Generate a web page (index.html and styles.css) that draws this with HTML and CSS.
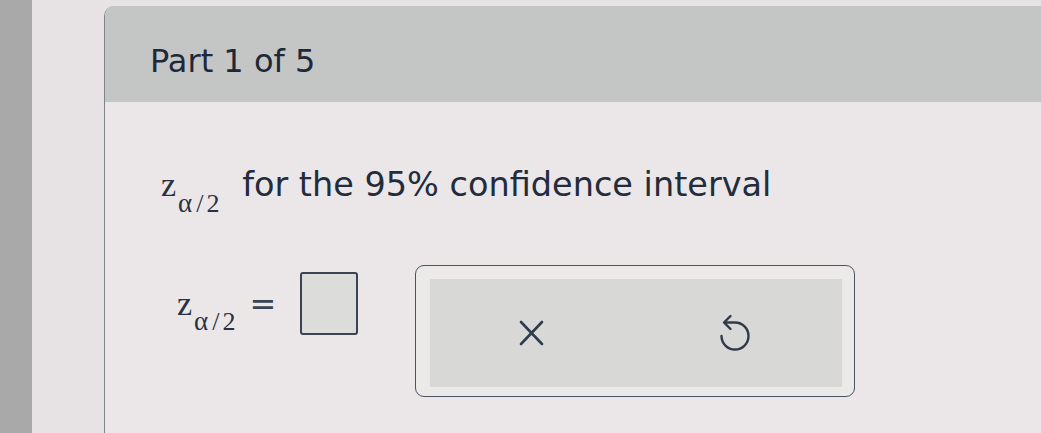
FILE: index.html
```html
<!DOCTYPE html>
<html lang="en">
<head>
<meta charset="utf-8">
<title>Part 1 of 5</title>
<link rel="stylesheet" href="styles.css">
</head>
<body>
<div class="page">
  <div class="rail"></div>
  <div class="margin"></div>
  <main class="card">
    <header class="card-head">
      <h1 class="part">Part 1 of 5</h1>
    </header>
    <section class="card-body">
      <p class="question"><span class="math"><span class="z">z</span><sub class="sub"><span class="alpha">α</span>/2</sub></span> for the 95% confidence interval</p>
      <div class="answer">
        <div class="expr"><span class="math"><span class="z">z</span><sub class="sub"><span class="alpha">α</span>/2</sub></span><span class="eq">=</span><span class="input"></span></div>
        <div class="tools">
          <div class="tools-inner">
            <button class="tool" type="button" aria-label="Clear">
              <svg width="25" height="26" viewBox="0 0 25 26"><path d="M2 2 L23 24 M23 2 L2 24" fill="none" stroke="#2f3b4d" stroke-width="2.6" stroke-linecap="round"/></svg>
            </button>
            <button class="tool" type="button" aria-label="Undo">
              <svg width="34" height="40" viewBox="0 0 34 40"><path d="M3.5 23 A13.5 13.5 0 1 0 17 9.5 H7" fill="none" stroke="#2f3b4d" stroke-width="2.4" stroke-linecap="round"/><path d="M12.5 3 L6 9.5 L12.5 16" fill="none" stroke="#2f3b4d" stroke-width="2.4" stroke-linecap="round" stroke-linejoin="round"/></svg>
            </button>
          </div>
        </div>
      </div>
    </section>
  </main>
</div>
</body>
</html>
```

FILE: styles.css
```css
html, body {
  margin: 0;
  padding: 0;
}

body {
  background: #e8e3e5;
  font-family: "DejaVu Sans", Verdana, sans-serif;
  color: #222c3c;
}

.page {
  display: flex;
  height: 433px;
  overflow: hidden;
}

.rail {
  width: 32px;
  flex: none;
  background: #a8a9a8;
}

.margin {
  width: 72px;
  flex: none;
  background: #e7e2e4;
}

.card {
  flex: 1;
  margin-top: 6px;
  display: flex;
  flex-direction: column;
  background: #ebe7e8;
  border-left: 1px solid #7f8387;
  border-top-left-radius: 10px;
  overflow: hidden;
}

.card-head {
  height: 96px;
  flex: none;
  background: #c3c6c4;
  padding: 39px 0 0 45px;
  box-sizing: border-box;
}

.part {
  margin: 0;
  font-size: 32px;
  font-weight: normal;
  line-height: 32px;
  color: #1f2838;
}

.card-body {
  flex: 1;
  padding: 63px 0 0 56px;
}

.question {
  margin: 0;
  font-size: 33.5px;
  line-height: 40px;
  white-space: nowrap;
}

.math {
  font-family: "Liberation Serif", "Times New Roman", serif;
  margin-right: 9px;
  color: #2a3242;
}

.z {
  font-size: 34px;
}

.sub {
  font-size: 26px;
  line-height: 0;
  vertical-align: -16px;
  margin-left: 2px;
  letter-spacing: 3px;
}

.alpha {
  font-size: 27px;
  margin-right: 1px;
}

.answer {
  margin-top: 60px;
  display: flex;
  align-items: flex-start;
}

.expr {
  margin-left: 16px;
  margin-top: 7px;
  font-size: 32px;
  line-height: 40px;
  white-space: nowrap;
}

.expr .math {
  margin-right: 11px;
}

.expr .sub {
  vertical-align: -15px;
}

.eq {
  font-size: 32px;
  color: #3a4352;
}

.input {
  display: inline-block;
  width: 54px;
  height: 59px;
  margin-left: 24px;
  vertical-align: -20px;
  background: #dcdcdb;
  border: 2px solid #3a4452;
  border-radius: 3px;
}

.tools {
  margin-left: 57px;
  width: 440px;
  height: 132px;
  box-sizing: border-box;
  border: 1.5px solid #4a5361;
  border-radius: 9px;
  background: #ece9e9;
  padding: 13px 12px 9px 14px;
}

.tools-inner {
  height: 100%;
  display: grid;
  grid-template-columns: 1fr 1fr;
  align-items: center;
  justify-items: center;
  background: #d8d8d7;
  padding-right: 6px;
}

.tool {
  border: 0;
  background: transparent;
  padding: 0;
  margin: 0;
  display: flex;
  align-items: center;
  justify-content: center;
}

.tool svg {
  display: block;
}
```
